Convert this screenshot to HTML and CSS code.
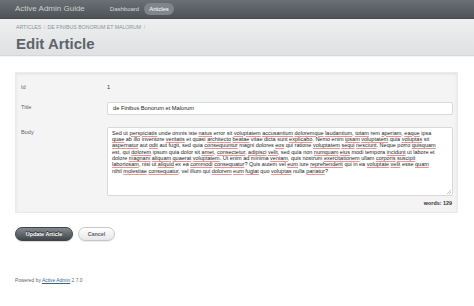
FILE: index.html
```html
<!DOCTYPE html>
<html>
<head>
<meta charset="utf-8">
<title>Edit Article | Active Admin Guide</title>
<link rel="stylesheet" href="styles.css">
</head>
<body>
<header class="header">
  <h1 class="site-title">Active Admin Guide</h1>
  <nav class="tabs">
    <a class="tab">Dashboard</a>
    <a class="tab current">Articles</a>
  </nav>
</header>
<div class="titlebar">
  <div class="breadcrumb">ARTICLES <span class="sep">/</span> DE FINIBUS BONORUM ET MALORUM <span class="sep">/</span></div>
  <h2 class="page-title">Edit Article</h2>
</div>
<main class="main">
  <form class="form">
    <fieldset class="inputs">
      <div class="row row-id">
        <label class="lbl">Id</label>
        <div class="val">1</div>
      </div>
      <div class="row">
        <label class="lbl">Title</label>
        <div class="input">de Finibus Bonorum et Malorum</div>
      </div>
      <div class="row">
        <label class="lbl">Body</label>
        <div class="textarea">
          <div class="ta-line">Sed ut <span class="sp">perspiciatis</span> unde omnis iste <span class="sp">natus</span> error sit <span class="sp">voluptatem</span> <span class="sp">accusantium</span> <span class="sp">doloremque</span> <span class="sp">laudantium</span>, <span class="sp">totam</span> rem <span class="sp">aperiam</span>, <span class="sp">eaque</span> ipsa</div>
          <div class="ta-line"><span class="sp">quae</span> ab illo inventore <span class="sp">veritatis</span> et quasi <span class="sp">architecto</span> <span class="sp">beatae</span> vitae dicta sunt <span class="sp">explicabo</span>. Nemo enim <span class="sp">ipsam</span> <span class="sp">voluptatem</span> quia <span class="sp">voluptas</span> sit</div>
          <div class="ta-line"><span class="sp">aspernatur</span> aut <span class="sp">odit</span> aut fugit, sed quia <span class="sp">consequuntur</span> magni dolores <span class="sp">eos</span> qui ratione <span class="sp">voluptatem</span> <span class="sp">sequi</span> <span class="sp">nesciunt</span>. Neque porro <span class="sp">quisquam</span></div>
          <div class="ta-line">est, qui <span class="sp">dolorem</span> ipsum quia dolor sit <span class="sp">amet</span>, <span class="sp">consectetur</span>, <span class="sp">adipisci</span> <span class="sp">velit</span>, sed quia non <span class="sp">numquam</span> <span class="sp">eius</span> modi tempora <span class="sp">incidunt</span> ut labore et</div>
          <div class="ta-line">dolore <span class="sp">magnam</span> <span class="sp">aliquam</span> <span class="sp">quaerat</span> <span class="sp">voluptatem</span>. Ut enim ad minima <span class="sp">veniam</span>, quis nostrum <span class="sp">exercitationem</span> ullam <span class="sp">corporis</span> <span class="sp">suscipit</span></div>
          <div class="ta-line"><span class="sp">laboriosam</span>, nisi ut <span class="sp">aliquid</span> ex ea <span class="sp">commodi</span> <span class="sp">consequatur</span>? Quis autem vel <span class="sp">eum</span> iure <span class="sp">reprehenderit</span> qui in ea <span class="sp">voluptate</span> <span class="sp">velit</span> esse <span class="sp">quam</span></div>
          <div class="ta-line">nihil <span class="sp">molestiae</span> <span class="sp">consequatur</span>, vel illum qui <span class="sp">dolorem</span> <span class="sp">eum</span> <span class="sp">fugiat</span> quo <span class="sp">voluptas</span> nulla <span class="sp">pariatur</span>?</div>
          <svg class="grip" width="4" height="4" viewBox="0 0 4 4"><path d="M4 0L0 4M4 2L2 4" stroke="#9a9a9a" stroke-width="0.6"/></svg>
        </div>
      </div>
      <div class="words">words: 129</div>
    </fieldset>
    <div class="actions">
      <button type="button" class="btn btn-primary">Update Article</button>
      <button type="button" class="btn btn-cancel">Cancel</button>
    </div>
  </form>
</main>
<footer class="footer">Powered by <a class="footer-link">Active Admin</a> 2.7.0</footer>
</body>
</html>
```
FILE: styles.css
```css
html, body {
  margin: 0;
  padding: 0;
  background: #fff;
}
body {
  font-family: "Liberation Sans", Arial, Helvetica, sans-serif;
  color: #323537;
  width: 474px;
  height: 306px;
  overflow: hidden;
}
.header {
  height: 19px;
  display: flex;
  align-items: center;
  padding-left: 15px;
  background: linear-gradient(180deg, #6a7176 0%, #4d5256 100%);
  border-bottom: 1px solid #45494c;
  box-sizing: border-box;
}
.site-title {
  margin: 0;
  font-size: 8px;
  font-weight: normal;
  color: #cdcdcd;
  line-height: 10px;
}
.tabs {
  display: flex;
  align-items: center;
  margin-left: 16px;
  gap: 0;
}
.tab {
  font-size: 6px;
  color: #d9d9d9;
  padding: 0 5px;
  height: 12px;
  line-height: 12px;
  border-radius: 6px;
}
.tab:first-child {
  margin-left: 4px;
}
.tab.current {
  background: #7f868b;
  color: #ffffff;
  margin-left: 0;
}
.titlebar {
  height: 37px;
  box-sizing: border-box;
  padding: 5px 16px 0;
  background: linear-gradient(180deg, #efefef 0%, #dfe1e2 100%);
  border-bottom: 1px solid #d6d6d6;
  box-shadow: 0 1px 1px rgba(0,0,0,0.04);
}
.breadcrumb {
  font-size: 5.2px;
  line-height: 6px;
  color: #8a949e;
}
.sep {
  color: #aab2b9;
  margin: 0 1px;
}
.page-title {
  margin: 5px 0 0;
  font-size: 15px;
  line-height: 17px;
  font-weight: bold;
  color: #5e6469;
}
.main {
  padding: 16px 16px 0 15px;
}
.form {
  margin: 0;
}
.inputs {
  margin: 0;
  border: 1px solid #ebebeb;
  background: #f4f4f4;
  box-shadow: inset 0 1px 3px #e0e0e0;
  padding: 8px 4px 5px 4px;
  display: flex;
  flex-direction: column;
  min-width: 0;
}
.row {
  display: flex;
  align-items: flex-start;
}
.row + .row {
  margin-top: 8px;
}
.row + .row + .row {
  margin-top: 12px;
}
.row-id {
  height: 13px;
}
.lbl {
  width: 87px;
  flex: none;
  font-size: 5.6px;
  line-height: 6.5px;
  color: #5e6469;
  padding-top: 2px;
  padding-left: 1px;
  box-sizing: border-box;
}
.row-id .lbl, .row-id .val {
  padding-top: 3px;
}
.val {
  font-size: 5.6px;
  line-height: 6.5px;
  color: #323537;
}
.input {
  flex: 1;
  height: 13px;
  box-sizing: border-box;
  background: #fff;
  border: 1px solid #d5dadf;
  border-radius: 2px;
  font-size: 5.7px;
  line-height: 11px;
  padding-left: 5px;
  color: #222;
}
.textarea {
  flex: 1;
  height: 69px;
  box-sizing: border-box;
  background: #fff;
  border: 1px solid #d5dadf;
  border-radius: 2px;
  padding: 1.5px 4px 0 4px;
  position: relative;
  overflow: hidden;
}
.ta-line {
  white-space: nowrap;
  font-size: 5.5px;
  line-height: 6.4px;
  height: 6.4px;
  color: #1e1e1e;
}
.sp {
  text-decoration-line: underline;
  text-decoration-style: solid;
  text-decoration-color: rgba(226, 90, 80, 0.65);
  text-decoration-thickness: 1px;
  text-underline-offset: 0.8px;
}
.grip {
  position: absolute;
  right: 1px;
  bottom: 1px;
}
.words {
  margin-top: 4px;
  text-align: right;
  font-size: 5.4px;
  line-height: 6.5px;
  font-weight: bold;
  color: #323537;
  padding-right: 1px;
}
.actions {
  display: flex;
  gap: 5px;
  margin-top: 14px;
}
.btn {
  height: 14px;
  border-radius: 7px;
  font-family: "Liberation Sans", Arial, sans-serif;
  font-size: 5.4px;
  font-weight: bold;
  padding: 0;
  cursor: pointer;
}
.btn-primary {
  width: 58px;
  color: #fff;
  border: 1px solid #3f4346;
  background: linear-gradient(180deg, #838a90 0%, #414549 100%);
  box-shadow: 0 1px 1px rgba(0,0,0,0.15);
  text-shadow: 0 -1px 0 #222;
}
.btn-cancel {
  width: 37px;
  color: #5e6469;
  border: 1px solid #c7c7c7;
  background: linear-gradient(180deg, #ffffff 0%, #e7e7e7 100%);
  box-shadow: 0 1px 1px rgba(0,0,0,0.08);
}
.footer {
  margin-top: 37px;
  padding-left: 15px;
  font-size: 4.9px;
  line-height: 6px;
  color: #666;
}
.footer-link {
  color: #38678b;
  text-decoration: underline;
}
```
